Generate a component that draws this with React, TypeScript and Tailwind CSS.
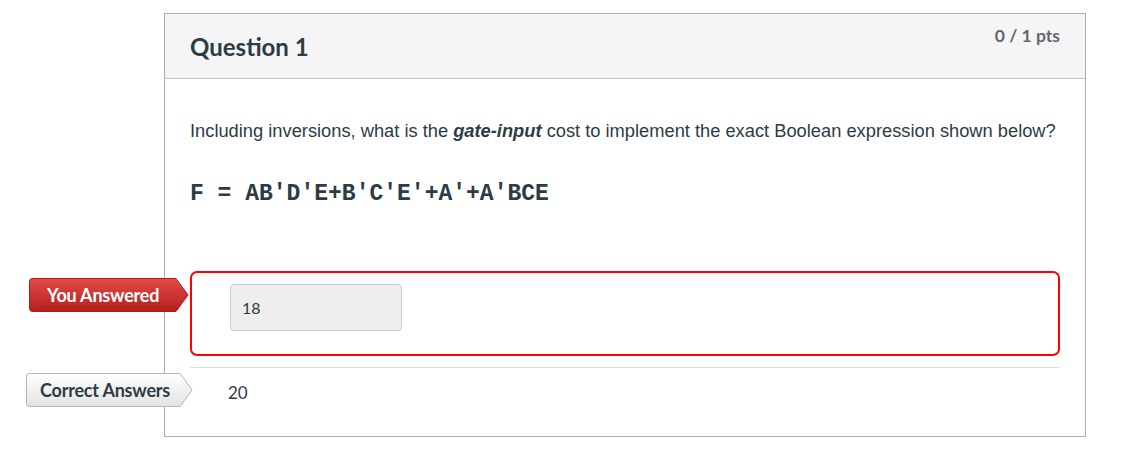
import React from 'react';

function Ribbon({ label, variant }: { label: string; variant: 'red' | 'gray' }) {
  const red = variant === 'red';
  const gid = red ? 'ribbon-red' : 'ribbon-gray';
  return (
    <div className="relative w-[167px] h-[34px]">
      <svg width="167" height="34" viewBox="0 0 167 34" className="absolute inset-0">
        <defs>
          <linearGradient id={gid} x1="0" y1="0" x2="0" y2="1">
            {red ? (
              <>
                <stop offset="0" stopColor="#e44a48" />
                <stop offset="1" stopColor="#b3201e" />
              </>
            ) : (
              <>
                <stop offset="0" stopColor="#ffffff" />
                <stop offset="1" stopColor="#e3e3e3" />
              </>
            )}
          </linearGradient>
        </defs>
        <path
          d={
            red
              ? 'M3.5,0.5 H147 L159,17 L147,33.5 H3.5 Q0.5,33.5 0.5,30.5 V3.5 Q0.5,0.5 3.5,0.5 Z'
              : 'M3.5,0.5 H154 L166,17 L154,33.5 H3.5 Q0.5,33.5 0.5,30.5 V3.5 Q0.5,0.5 3.5,0.5 Z'
          }
          fill={`url(#${gid})`}
          stroke={red ? '#a81c1a' : '#b5b5b5'}
          strokeWidth="1"
        />
      </svg>
      <span
        className={`absolute top-0 h-[34px] flex items-center font-['Lato',sans-serif] font-bold text-[18px] tracking-[-0.2px] ${
          red ? 'left-[18px] text-white' : 'left-[14px] text-[#2d3b45]'
        }`}
      >
        {label}
      </span>
    </div>
  );
}

export default function App() {
  return (
    <div className="w-[1145px] h-[461px] bg-white pt-[13px] pl-[164px]">
      <div className="relative w-[922px] h-[424px] border border-[#adadad] bg-white">
        <div className="h-[65px] bg-[#f5f5f5] border-b border-[#c4c4c4] flex justify-between px-[25px]">
          <h2 className="pt-[18px] font-['Lato',sans-serif] font-bold text-[24px] leading-[30px] text-[#2d3b45]">
            Question 1
          </h2>
          <span className="pt-[11px] font-['Lato',sans-serif] font-bold text-[17.5px] leading-[22px] text-[#5f6870]">
            0 / 1 pts
          </span>
        </div>

        <div className="px-[25px] pt-[40px]">
          <p className="font-['Liberation_Sans',Arial,sans-serif] text-[18.3px] leading-[24px] text-[#2d3b45]">
            Including inversions, what is the <strong><em>gate-input</em></strong> cost to implement the exact Boolean expression shown below?
          </p>
          <p className="mt-[36px] font-['Liberation_Mono',monospace] font-bold text-[23px] leading-[30px] text-[#2d3b45] whitespace-pre">
            F = AB'D'E+B'C'E'+A'+A'BCE
          </p>

          <div className="mt-[62px] h-[85px] border-2 border-[#ff0000] rounded-[7px] pl-[38px] pt-[11px]">
            <div className="w-[172px] h-[47px] bg-[#eeeeee] border border-[#cccccc] rounded-[4px] flex items-center pl-[11px] font-['Lato',sans-serif] text-[16px] text-[#2d3b45]">
              18
            </div>
          </div>

          <div className="mt-[11px] border-t border-[#dddddd] h-[37px] flex items-end pl-[38px]">
            <span className="font-['Lato',sans-serif] text-[17px] leading-[22px] text-[#2d3b45]">20</span>
          </div>
        </div>

        <div className="absolute left-[-136px] top-[264px]">
          <Ribbon label="You Answered" variant="red" />
        </div>
        <div className="absolute left-[-139px] top-[359px]">
          <Ribbon label="Correct Answers" variant="gray" />
        </div>
      </div>
    </div>
  );
}
